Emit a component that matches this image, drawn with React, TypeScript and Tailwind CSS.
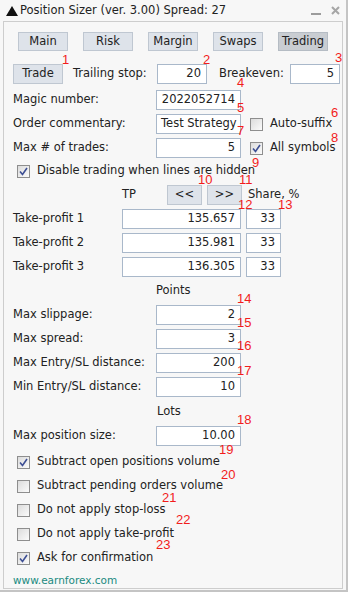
import React from 'react';

const Field = ({ w, left, children }: { w: string; left?: boolean; children: React.ReactNode }) => (
  <div
    className={`${w} h-[20px] shrink-0 border border-[#a9b8ca] bg-white flex items-center overflow-hidden whitespace-nowrap ${
      left ? 'justify-start pl-[4px]' : 'justify-end pr-[5px]'
    }`}
  >
    {children}
  </div>
);

const Check = ({ on }: { on?: boolean }) => (
  <div className="w-[13px] h-[13px] shrink-0 border border-[#8e8e8e] bg-gradient-to-br from-[#dcdcdc] to-[#fbfbfb] flex items-center justify-center">
    {on && (
      <svg width="9" height="9" viewBox="0 0 9 9">
        <path d="M1 4.5 L3.5 7.5 L8 1" fill="none" stroke="#3d4f94" strokeWidth="1.6" />
      </svg>
    )}
  </div>
);

const Btn = ({ w, dark, children }: { w: string; dark?: boolean; children: React.ReactNode }) => (
  <div
    className={`${w} h-[19px] shrink-0 flex items-center justify-center border ${
      dark ? 'bg-[#c9cdd2] border-[#b5bcc4]' : 'bg-[#dee3ea] border-[#bfc7d1]'
    }`}
  >
    {children}
  </div>
);

const Row = ({ label, value, children }: { label: string; value: string; children?: React.ReactNode }) => (
  <div className="h-[24px] flex items-center">
    <div className="w-[143px] shrink-0">{label}</div>
    <Field w="w-[85px]">{value}</Field>
    {children}
  </div>
);

const CheckRow = ({ on, label }: { on?: boolean; label: string }) => (
  <div className="h-[24px] flex items-center pl-[4px]">
    <Check on={on} />
    <span className="ml-[7px]">{label}</span>
  </div>
);

// red annotation numbers: [label, left, top]
const marks: [string, number, number][] = [
  ['1', 62, 55], ['2', 203, 55], ['3', 335, 53], ['4', 237, 78], ['5', 237, 103],
  ['6', 331, 108], ['7', 237, 126], ['8', 331, 133], ['9', 252, 158], ['10', 198, 175],
  ['11', 239, 175], ['12', 238, 200], ['13', 278, 200], ['14', 237, 294], ['15', 237, 318],
  ['16', 237, 341], ['17', 237, 366], ['18', 237, 415], ['19', 219, 445], ['20', 221, 470],
  ['21', 162, 493], ['22', 176, 515], ['23', 156, 540],
];

export default function App() {
  return (
    <div className="relative w-[348px] h-[592px] bg-[#f7f7f7] border-r-2 border-b-2 border-[#c4c4c4] text-[#222] text-[11.5px] font-['DejaVu_Sans',sans-serif] leading-none overflow-hidden">
      {/* title bar */}
      <div className="h-[21px] flex items-center">
        <svg width="12" height="10" viewBox="0 0 12 10" className="ml-[6px]">
          <polygon points="6,0 12,10 0,10" fill="#111" />
        </svg>
        <span className="ml-[2px] text-[11.5px] text-[#222]">Position Sizer (ver. 3.00) Spread: 27</span>
        <div className="ml-auto mr-[6px] flex items-center gap-[10px]">
          <div className="w-[10px] h-[2px] bg-[#9c9c9c] mt-[6px]" />
          <svg width="9" height="9" viewBox="0 0 9 9">
            <path d="M1 1 L8 8 M8 1 L1 8" stroke="#a6a6a6" strokeWidth="2" />
          </svg>
        </div>
      </div>

      {/* panel */}
      <div className="mx-[3px] h-[568px] border border-[#cdcdcd] pl-[9px]">
        <div className="mt-[10px] h-[19px] flex gap-[15px] pl-[5px]">
          <Btn w="w-[50px]">Main</Btn>
          <Btn w="w-[50px]">Risk</Btn>
          <Btn w="w-[50px]">Margin</Btn>
          <Btn w="w-[50px]">Swaps</Btn>
          <Btn w="w-[50px]" dark>Trading</Btn>
        </div>

        <div className="mt-[11px] h-[24px] flex items-center">
          <div className="w-[50px] h-[20px] shrink-0 flex items-center justify-center border border-[#bfc7d1] bg-[#dee3ea]">Trade</div>
          <div className="ml-[10px] w-[84px] shrink-0">Trailing stop:</div>
          <Field w="w-[50px]">20</Field>
          <div className="ml-[12px] w-[71px] shrink-0">Breakeven:</div>
          <Field w="w-[50px]">5</Field>
        </div>

        <div className="mt-[2px]">
          <Row label="Magic number:" value="2022052714" />
          <div className="h-[24px] flex items-center">
            <div className="w-[143px] shrink-0">Order commentary:</div>
            <Field w="w-[85px]" left>Test Strategy</Field>
            <div className="ml-[9px]"><Check /></div>
            <span className="ml-[7px]">Auto-suffix</span>
          </div>
          <Row label="Max # of trades:" value="5">
            <div className="ml-[9px]"><Check on /></div>
            <span className="ml-[7px]">All symbols</span>
          </Row>
          <div className="h-[22px] flex items-center pl-[4px]">
            <Check on />
            <span className="ml-[7px]">Disable trading when lines are hidden</span>
          </div>

          <div className="h-[25px] flex items-center">
            <div className="w-[109px] shrink-0" />
            <div className="w-[45px] shrink-0">TP</div>
            <div className="w-[35px] h-[20px] flex items-center justify-center border border-[#bfc7d1] bg-[#dee3ea]">&lt;&lt;</div>
            <div className="ml-[5px] w-[35px] h-[20px] flex items-center justify-center border border-[#bfc7d1] bg-[#dee3ea]">&gt;&gt;</div>
            <span className="ml-[6px]">Share, %</span>
          </div>

          {[
            ['Take-profit 1', '135.657'],
            ['Take-profit 2', '135.981'],
            ['Take-profit 3', '136.305'],
          ].map(([l, v]) => (
            <div key={l} className="h-[24px] flex items-center">
              <div className="w-[109px] shrink-0">{l}</div>
              <Field w="w-[119px]">{v}</Field>
              <div className="ml-[5px]">
                <Field w="w-[35px]">33</Field>
              </div>
            </div>
          ))}

          <div className="h-[24px] flex items-center pl-[143px]">Points</div>
          <Row label="Max slippage:" value="2" />
          <Row label="Max spread:" value="3" />
          <Row label="Max Entry/SL distance:" value="200" />
          <Row label="Min Entry/SL distance:" value="10" />
          <div className="h-[25px] flex items-center pl-[144px]">Lots</div>
          <Row label="Max position size:" value="10.00" />

          <div className="mt-[2px]">
            <CheckRow on label="Subtract open positions volume" />
            <CheckRow label="Subtract pending orders volume" />
            <CheckRow label="Do not apply stop-loss" />
            <CheckRow label="Do not apply take-profit" />
            <CheckRow on label="Ask for confirmation" />
          </div>
          <div className="h-[20px] flex items-center text-[10.5px] text-[#1a8a80]">www.earnforex.com</div>
        </div>
      </div>

      {marks.map(([n, x, y]) => (
        <span
          key={n}
          className="absolute text-[13px] leading-none text-[#f21c1c] font-['Liberation_Sans',sans-serif]"
          style={{ left: x, top: y - 2 }}
        >
          {n}
        </span>
      ))}
    </div>
  );
}
